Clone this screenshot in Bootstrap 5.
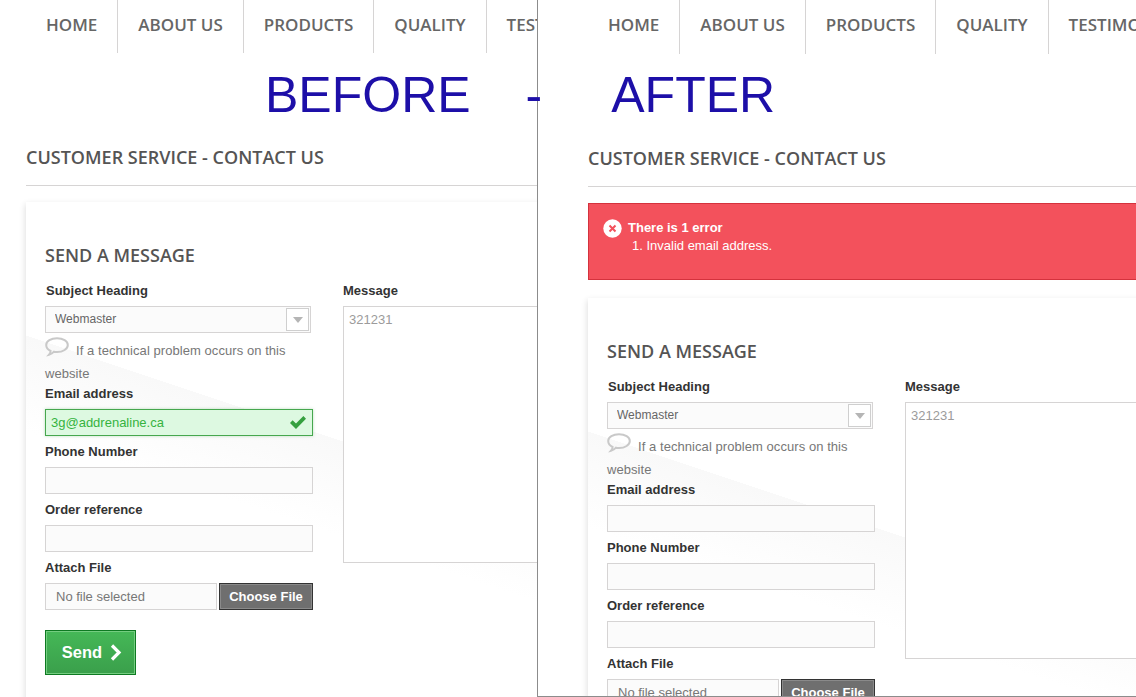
<!DOCTYPE html>
<html lang="en">
<head>
<meta charset="utf-8">
<title>Before - After</title>
<link href="https://cdn.jsdelivr.net/npm/bootstrap@5.3.0/dist/css/bootstrap.min.css" rel="stylesheet">
<style>
html,body{margin:0;height:100%;background:#fff;overflow:hidden}
body{font-family:"Liberation Sans",Arial,sans-serif;font-size:13px;color:#777}
.stage{width:1136px;height:697px;position:relative;overflow:hidden}
.pane{overflow:hidden;height:697px;flex:none}
.pane-before{width:537px;padding-left:26px}
.pane-after{width:599px;padding-left:50px;border-left:1px solid #8c8c8c;border-bottom:1px solid #8c8c8c}
.sheet{width:1000px}
.topnav{height:53px;flex-wrap:nowrap}
.pane-after .topnav{height:54px}
.topnav .nav-link{font-family:"Open Sans",sans-serif;font-weight:600;font-size:17px;color:#666;padding:0 20px 4px;height:100%;display:flex;align-items:center;border-right:1px solid #d6d4d4;white-space:nowrap}
.topnav .nav-item:last-child .nav-link{border-right:0}
.page-head{font-family:"Open Sans",sans-serif;font-weight:600;font-size:18px;line-height:24px;color:#555454;margin:92px 0 0;padding-bottom:16px;border-bottom:1px solid #d6d4d4}
.err-box{margin:16px 0 0;height:77px;background:#f3515c;border:1px solid #d4323d;border-radius:0;color:#fff;padding:15px 14px 0;font-size:13px;line-height:18px;display:block}
.err-title{font-weight:700;display:flex;align-items:center;gap:6px;height:18px}
.err-line{padding-left:29px;margin:0}
.msg-card{border:0;border-radius:0;margin-top:16px;height:640px;padding:41px 19px 0;box-shadow:-3px 0 6px -2px rgba(0,0,0,.12),0 1px 0 #dcdcdc;background:linear-gradient(198.5deg,#fff 0 444px,#f9f9f9 444px,#fff 535px)}
.pane-after .msg-card{margin-top:18px}
.msg-title{font-family:"Open Sans",sans-serif;font-weight:600;font-size:18px;line-height:25px;color:#555454;margin:0 0 14px}
.col-fields{width:268px;flex:none}
.col-msg{width:560px;flex:none;margin-left:30px}
.fld-label{display:block;font-weight:700;color:#333;font-size:13px;line-height:18px;margin:0 0 6px}
.fld-first{margin-left:1px}
.fld{height:27px;min-height:27px;padding:3px 5px;border:1px solid #d6d4d4;border-radius:0;background:#fbfbfb;font-size:13px;line-height:19px;color:#9c9b9b;margin-bottom:7px;box-shadow:none}
.fld-ok,.fld-ok:focus{background:#ddf9e1;border-color:#46a74e;color:#35b33f;box-shadow:0 0 3px rgba(70,167,78,.35)}
.sel-wrap{width:266px;height:27px}
.sel-box{height:27px;width:266px;padding:3px 9px;border:1px solid #d6d4d4;border-radius:0;background:#fbfbfb;font-size:12px;line-height:19px;color:#666;appearance:none;-webkit-appearance:none;box-shadow:none}
.sel-btn{position:absolute;right:2px;top:2px;width:23px;height:23px;background:#fff;border:1px solid #cfcfcf;display:flex;align-items:center;justify-content:center}
.sel-tri{width:0;height:0;border:solid transparent;border-width:6px 5.5px 0;border-top-color:#b5b5b5}
.hint{margin:4px 0 0;line-height:23px;color:#777;height:48px;letter-spacing:.06px}
.hint svg{vertical-align:-2px;margin-right:7px}
.ok-mark{position:absolute;right:6px;top:6px}
.file-row{gap:2px;height:27px}
.file-name{width:172px;height:27px;border:1px solid #d6d4d4;background:#fbfbfb;padding:0 10px;line-height:26px;color:#777}
.file-btn{width:94px;height:27px;padding:0;border:1px solid #333;border-radius:0;background:#6f6f6f;color:#fff;font-weight:700;font-size:13px;line-height:23px;box-shadow:inset 0 0 0 1px #8a8a8a}
.file-btn:hover{background:#6f6f6f;color:#fff;border-color:#333}
.send-btn{margin-top:20px;width:91px;height:45px;padding:0 0 0 3px;border:1px solid #0e7a22;border-radius:0;background:linear-gradient(#45b857,#3a9f4b);color:#fff;font-weight:700;font-size:16.5px;box-shadow:inset 0 0 0 1px #74cd80;display:flex;align-items:center;justify-content:center;gap:8px}
.send-btn:hover{background:linear-gradient(#45b857,#3a9f4b);color:#fff;border-color:#0e7a22}
.msg-area{height:257px;width:100%;padding:5px;border:1px solid #d6d4d4;border-radius:0;background:#fff;color:#9c9b9b;font-size:13px;line-height:15px;resize:none;box-shadow:none}
.banner{position:absolute;left:265px;top:64px;font-size:50px;line-height:62px;color:#1d0fa8;white-space:nowrap}
.banner span:nth-child(2){margin-left:55px;margin-right:69px}
</style>
</head>
<body>
<div class="stage d-flex">

  <div class="pane pane-before">
    <div class="sheet">
      <ul class="nav topnav">
        <li class="nav-item"><a class="nav-link" href="#">HOME</a></li>
        <li class="nav-item"><a class="nav-link" href="#">ABOUT US</a></li>
        <li class="nav-item"><a class="nav-link" href="#">PRODUCTS</a></li>
        <li class="nav-item"><a class="nav-link" href="#">QUALITY</a></li>
        <li class="nav-item"><a class="nav-link" href="#">TESTIMONIALS</a></li>
      </ul>
      <h1 class="page-head">CUSTOMER SERVICE - CONTACT US</h1>
      <form class="card msg-card">
        <h3 class="msg-title">SEND A MESSAGE</h3>
        <div class="d-flex">
          <div class="col-fields">
            <label class="fld-label fld-first">Subject Heading</label>
            <div class="sel-wrap position-relative">
              <select class="form-select sel-box"><option>Webmaster</option></select>
              <span class="sel-btn"><span class="sel-tri"></span></span>
            </div>
            <p class="hint"><svg width="24" height="20" viewBox="0 0 24 20" fill="none" stroke="#c9c9c9" stroke-width="2"><path d="M12 1.200c6 0 10.800 3 10.800 6.900 0 3.800-4.800 6.900-10.800 6.900-1 0-2-.1-3-.3-1.300 1.500-3 2.500-5 3 .9-1 1.500-2.300 1.600-3.700C2.800 12.800 1.200 10.600 1.200 8.100 1.200 4.200 6 1.200 12 1.200z"/></svg>If a technical problem occurs on this website</p>
            <label class="fld-label">Email address</label>
            <div class="position-relative">
              <input class="form-control fld fld-ok" type="text" value="3g@addrenaline.ca">
              <svg class="ok-mark" width="18" height="15" viewBox="0 0 18 15"><path d="M1 8l2.600-2.700 3.400 3.300L14.400 1 17 3.700 7 14z" fill="#35a03f"/></svg>
            </div>
            <label class="fld-label">Phone Number</label>
            <input class="form-control fld" type="text">
            <label class="fld-label">Order reference</label>
            <input class="form-control fld" type="text">
            <label class="fld-label">Attach File</label>
            <div class="d-flex file-row">
              <span class="file-name">No file selected</span>
              <button type="button" class="btn file-btn">Choose File</button>
            </div>
            <button type="button" class="btn send-btn">Send <svg width="12" height="17" viewBox="0 0 12 17" fill="none" stroke="#fff" stroke-width="3.200"><path d="M2 1.500l7 7-7 7"/></svg></button>
          </div>
          <div class="col-msg">
            <label class="fld-label">Message</label>
            <textarea class="form-control msg-area">321231</textarea>
          </div>
        </div>
      </form>
    </div>
  </div>

  <div class="pane pane-after">
    <div class="sheet">
      <ul class="nav topnav">
        <li class="nav-item"><a class="nav-link" href="#">HOME</a></li>
        <li class="nav-item"><a class="nav-link" href="#">ABOUT US</a></li>
        <li class="nav-item"><a class="nav-link" href="#">PRODUCTS</a></li>
        <li class="nav-item"><a class="nav-link" href="#">QUALITY</a></li>
        <li class="nav-item"><a class="nav-link" href="#">TESTIMONIALS</a></li>
      </ul>
      <h1 class="page-head">CUSTOMER SERVICE - CONTACT US</h1>
      <div class="alert err-box" role="alert">
        <div class="err-title"><svg width="19" height="19" viewBox="0 0 19 19"><circle cx="9.500" cy="9.500" r="9.200" fill="#fff"/><path d="M6.500 6.500l6 6m0-6l-6 6" stroke="#f3515c" stroke-width="2"/></svg>There is 1 error</div>
        <p class="err-line">1. Invalid email address.</p>
      </div>
      <form class="card msg-card">
        <h3 class="msg-title">SEND A MESSAGE</h3>
        <div class="d-flex">
          <div class="col-fields">
            <label class="fld-label fld-first">Subject Heading</label>
            <div class="sel-wrap position-relative">
              <select class="form-select sel-box"><option>Webmaster</option></select>
              <span class="sel-btn"><span class="sel-tri"></span></span>
            </div>
            <p class="hint"><svg width="24" height="20" viewBox="0 0 24 20" fill="none" stroke="#c9c9c9" stroke-width="2"><path d="M12 1.200c6 0 10.800 3 10.800 6.900 0 3.800-4.800 6.900-10.800 6.900-1 0-2-.1-3-.3-1.300 1.500-3 2.500-5 3 .9-1 1.500-2.300 1.600-3.700C2.800 12.800 1.200 10.600 1.200 8.100 1.200 4.200 6 1.200 12 1.200z"/></svg>If a technical problem occurs on this website</p>
            <label class="fld-label">Email address</label>
            <input class="form-control fld" type="text">
            <label class="fld-label">Phone Number</label>
            <input class="form-control fld" type="text">
            <label class="fld-label">Order reference</label>
            <input class="form-control fld" type="text">
            <label class="fld-label">Attach File</label>
            <div class="d-flex file-row">
              <span class="file-name">No file selected</span>
              <button type="button" class="btn file-btn">Choose File</button>
            </div>
          </div>
          <div class="col-msg">
            <label class="fld-label">Message</label>
            <textarea class="form-control msg-area">321231</textarea>
          </div>
        </div>
      </form>
    </div>
  </div>

  <div class="banner d-flex"><span>BEFORE</span><span>-</span><span>AFTER</span></div>
</div>
<script src="https://cdn.jsdelivr.net/npm/bootstrap@5.3.0/dist/js/bootstrap.bundle.min.js"></script>
</body>
</html>
